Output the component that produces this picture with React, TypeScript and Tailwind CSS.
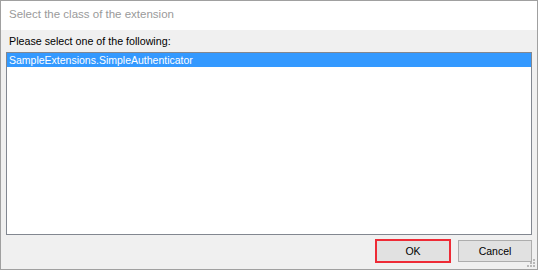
export default function App() {
  const font = { fontFamily: '"Liberation Sans", Arial, sans-serif' };
  return (
    <div
      className="relative w-[538px] h-[270px] border border-[#a0a0a0] flex flex-col bg-[#f0f0f0]"
      style={font}
    >
      <div className="h-[29px] bg-white pl-[8px] pt-[6px] text-[11.5px] leading-[14px] text-[#9a9a9a]">
        Select the class of the extension
      </div>
      <div className="flex-1 flex flex-col">
        <div className="pl-[8px] pt-[5px] text-[10.7px] leading-[13px] text-black">
          Please select one of the following:
        </div>
        <div className="mt-[4px] ml-[5px] mr-[5px] h-[183px] border border-[#828790] bg-white">
          <div className="h-[14px] bg-[#3399ff] pl-[2px] text-[10.5px] leading-[14px] text-white">
            SampleExtensions.SimpleAuthenticator
          </div>
        </div>
        <div className="mt-[4px] mr-[5px] flex justify-end items-start gap-[7px]">
          <button className="w-[76px] h-[24px] border-2 border-[#ee2b36] bg-[#e1e1e1] text-[10.5px] leading-[20px] text-black">
            OK
          </button>
          <button className="mt-[1px] w-[74px] h-[22px] border border-[#adadad] bg-[#e1e1e1] text-[10.5px] leading-[20px] text-black">
            Cancel
          </button>
        </div>
      </div>
      {/* size grip */}
      <svg
        className="absolute right-[2px] bottom-[2px]"
        width="8"
        height="8"
        viewBox="0 0 8 8"
      >
        <g fill="#b8b8b8">
          <rect x="6" y="0" width="2" height="2" />
          <rect x="3" y="3" width="2" height="2" />
          <rect x="6" y="3" width="2" height="2" />
          <rect x="0" y="6" width="2" height="2" />
          <rect x="3" y="6" width="2" height="2" />
          <rect x="6" y="6" width="2" height="2" />
        </g>
      </svg>
    </div>
  );
}
